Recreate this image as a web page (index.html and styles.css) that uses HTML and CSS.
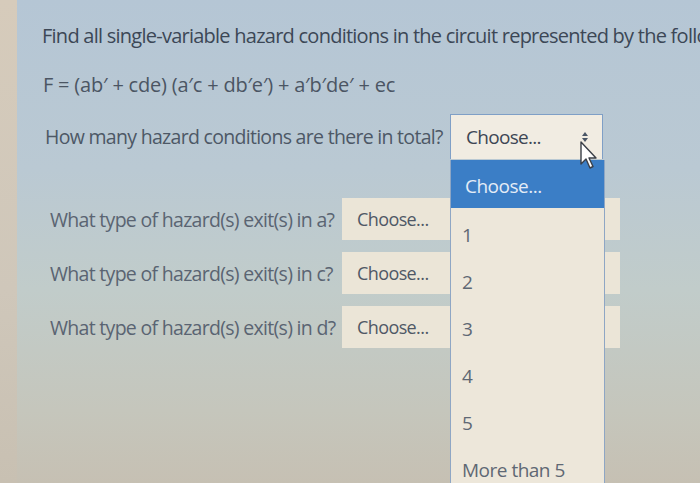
FILE: index.html
```html
<!DOCTYPE html>
<html>
<head>
<meta charset="utf-8">
<link rel="stylesheet" href="styles.css">
</head>
<body>
<div class="screen">
  <div class="bezel"></div>
  <div class="main">
    <p class="title">Find all single-variable hazard conditions in the circuit represented by the following</p>
    <p class="formula">F = (ab′ + cde) (a′c + db′e′) + a′b′de′ + ec</p>
    <div class="qrow">
      <span class="qlabel">How many hazard conditions are there in total?</span>
      <div class="select open">
        <span>Choose...</span>
        <svg class="updown" width="8" height="12" viewBox="0 0 8 12"><path d="M4 1 L7 5 H1 Z M4 11 L7 7 H1 Z" fill="#4a5666"/></svg>
      </div>
    </div>
    <div class="subrows">
      <div class="srow">
        <span class="slabel">What type of hazard(s) exit(s) in a?</span>
        <div class="sbox">Choose...</div>
      </div>
      <div class="srow">
        <span class="slabel">What type of hazard(s) exit(s) in c?</span>
        <div class="sbox">Choose...</div>
      </div>
      <div class="srow">
        <span class="slabel">What type of hazard(s) exit(s) in d?</span>
        <div class="sbox">Choose...</div>
      </div>
    </div>
  </div>
  <div class="dropdown">
    <div class="opt sel">Choose...</div>
    <div class="opt">1</div>
    <div class="opt">2</div>
    <div class="opt">3</div>
    <div class="opt">4</div>
    <div class="opt">5</div>
    <div class="opt">More than 5</div>
  </div>
  <svg class="cursor" width="22" height="30" viewBox="0 0 22 30"><path d="M2 2 L2 24 L7 19 L11 28 L14 26.5 L10 18 L17 18 Z" fill="#ffffff" stroke="#3a3f48" stroke-width="1.4" stroke-linejoin="round"/></svg>
</div>
</body>
</html>
```

FILE: styles.css
```css
html, body {
  margin: 0;
  padding: 0;
}
body {
  width: 700px;
  height: 483px;
  overflow: hidden;
  font-family: "Open Sans", "Noto Sans", sans-serif;
}
.screen {
  position: relative;
  width: 700px;
  height: 483px;
  display: flex;
  background: linear-gradient(180deg, #b5c6d5 0%, #bac9d3 35%, #c1ccca 60%, #c5c6bc 85%, #c6c0b3 100%);
  overflow: hidden;
}
.bezel {
  width: 17px;
  flex: none;
  background: linear-gradient(180deg, #d6cbbb 0%, #cfc7ba 60%, #c8c0b2 100%);
}
.main {
  flex: 1;
  padding-left: 25px;
  white-space: nowrap;
  min-width: 0;
}
.title {
  margin: 23px 0 0 0;
  font-size: 20px;
  color: #3c4756;
  letter-spacing: -0.75px;
  line-height: 26px;
}
.formula {
  margin: 23px 0 0 1px;
  font-size: 20px;
  color: #4b5563;
  letter-spacing: -0.2px;
  line-height: 26px;
}
.qrow {
  display: flex;
  align-items: center;
  margin-top: 16px;
  margin-left: 3px;
}
.qlabel {
  font-size: 19.5px;
  color: #4d5866;
  letter-spacing: -0.7px;
  width: 405px;
}
.select {
  position: relative;
  width: 153px;
  height: 45px;
  box-sizing: border-box;
  border: 1px solid #7f9fc6;
  border-bottom: none;
  background: #f1ece2;
  display: flex;
  align-items: center;
  padding-left: 15px;
  font-size: 19px;
  color: #3d4654;
  letter-spacing: -0.7px;
}
.updown {
  position: absolute;
  right: 13px;
  top: 16px;
}
.subrows {
  margin-top: 39px;
  margin-left: 8px;
  display: flex;
  flex-direction: column;
  gap: 12px;
}
.srow {
  display: flex;
  align-items: center;
  height: 42px;
}
.slabel {
  width: 292px;
  font-size: 19.5px;
  color: #5a6472;
  letter-spacing: -0.7px;
}
.sbox {
  width: 278px;
  height: 42px;
  box-sizing: border-box;
  background: #ebe5d7;
  padding-left: 15px;
  display: flex;
  align-items: center;
  font-size: 18px;
  color: #4f5866;
  letter-spacing: -0.6px;
}
.dropdown {
  position: absolute;
  left: 450px;
  top: 160px;
  width: 155px;
  height: 340px;
  box-sizing: border-box;
  background: #ede7da;
  border-left: 1px solid #8ea6c4;
  border-right: 1px solid #8ea6c4;
  display: flex;
  flex-direction: column;
  font-size: 19px;
  color: #5f6874;
  letter-spacing: -0.5px;
}
.opt {
  height: 47px;
  flex: none;
  padding-left: 11px;
  display: flex;
  align-items: center;
  padding-top: 6px;
  box-sizing: border-box;
}
.opt.sel {
  height: 48px;
  background: #3b7ec6;
  color: #e4ecf6;
  padding-top: 4px;
  padding-left: 14px;
  font-size: 19px;
}
.cursor {
  position: absolute;
  left: 579px;
  top: 140px;
}
```
